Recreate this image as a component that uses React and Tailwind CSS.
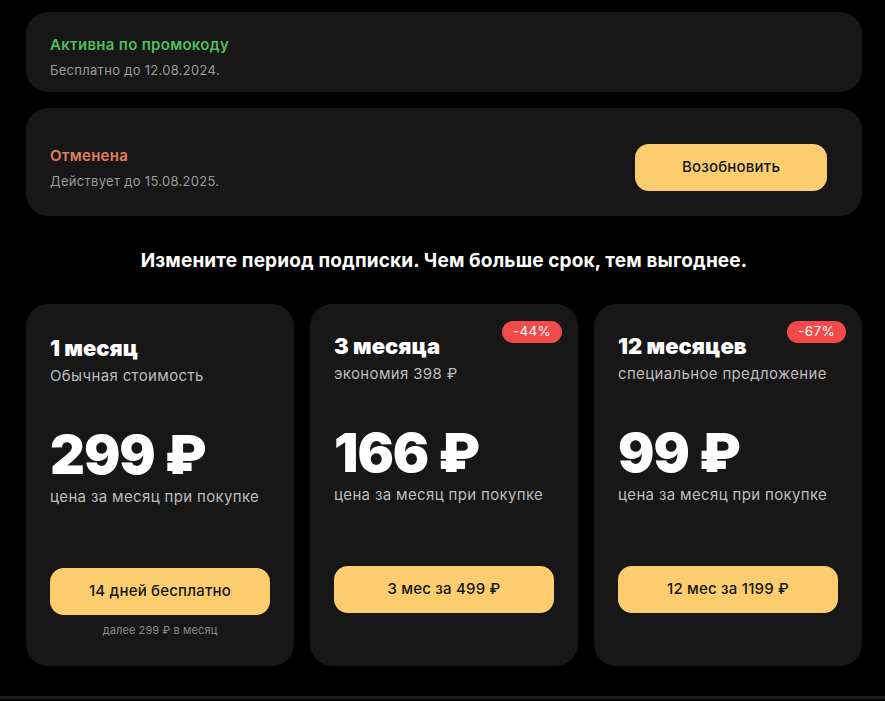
import React from "react";

const font = { fontFamily: "Inter, 'Noto Sans', sans-serif" };

function PriceCard({ title, subtitle, price, button, note, badge, shift }) {
  return (
    <div className={`relative h-[362px] w-[268px] rounded-[22px] bg-[#171717] px-6 ${shift ? "pt-[30px]" : "pt-[28px]"}`}>
      {badge && (
        <div className="absolute right-4 top-[17px] flex h-[22px] items-center rounded-full bg-[#f24a4a] px-[11px] text-[13.5px] leading-none tracking-[0.3px] text-white">
          {badge}
        </div>
      )}
      <div className="text-[22px] font-black leading-[28px] tracking-[0px] text-white">{title}</div>
      <div className="mt-[4px] text-[15px] leading-[20px] tracking-[0.35px] text-[#bdbdbd]">{subtitle}</div>
      <div className="mt-[39px] text-[54px] font-black leading-[60px] tracking-[-1px] text-white">{price}</div>
      <div className="mt-[2px] text-[15px] leading-[20px] tracking-[0.35px] text-[#bdbdbd]">{button.caption}</div>
      <button className="mt-[61px] flex h-[47px] w-[220px] items-center justify-center rounded-[14px] bg-[#fccd6e] text-[15px] font-medium tracking-[0.2px] text-[#161616]">
        {button.label}
      </button>
      {note && <div className="mt-[8px] text-center text-[11px] leading-[14px] tracking-[0.1px] text-[#8a8a8a]">{note}</div>}
    </div>
  );
}

export default function App() {
  return (
    <div className="min-h-[701px] w-full bg-black" style={font}>
      <div className="pl-[26px] pr-[23px] pt-[12px]">
        <div className="h-[80px] rounded-[22px] bg-[#171717] pl-6 pt-[23px]">
          <div className="text-[15px] font-semibold leading-[20px] tracking-[0.3px] text-[#4fbf56]">Активна по промокоду</div>
          <div className="mt-[6px] text-[13px] leading-[18px] tracking-[0.3px] text-[#9b9b9b]">Бесплатно до 12.08.2024.</div>
        </div>
        <div className="mt-4 flex h-[108px] items-start justify-between rounded-[22px] bg-[#171717] pl-6 pr-[35px] pt-[36px]">
          <div className="mt-[2px]">
            <div className="text-[15px] font-semibold leading-[20px] tracking-[0.3px] text-[#e27d5f]">Отменена</div>
            <div className="mt-[6px] text-[13px] leading-[18px] tracking-[0.3px] text-[#9b9b9b]">Действует до 15.08.2025.</div>
          </div>
          <button className="flex h-[47px] w-[192px] items-center justify-center rounded-[14px] bg-[#fccd6e] text-[15px] font-medium tracking-[0.2px] text-[#161616]">
            Возобновить
          </button>
        </div>
        <div className="mt-[33px] text-center text-[19px] font-bold leading-[24px] tracking-[0.15px] text-white">
          Измените период подписки. Чем больше срок, тем выгоднее.
        </div>
        <div className="mt-[31px] flex gap-4">
          <PriceCard
            shift
            title="1 месяц"
            subtitle="Обычная стоимость"
            price="299 ₽"
            button={{ caption: "цена за месяц при покупке", label: "14 дней бесплатно" }}
            note="далее 299 ₽ в месяц"
          />
          <PriceCard
            title="3 месяца"
            subtitle="экономия 398 ₽"
            price="166 ₽"
            badge="-44%"
            button={{ caption: "цена за месяц при покупке", label: "3 мес за 499 ₽" }}
          />
          <PriceCard
            title="12 месяцев"
            subtitle="специальное предложение"
            price="99 ₽"
            badge="-67%"
            button={{ caption: "цена за месяц при покупке", label: "12 мес за 1199 ₽" }}
          />
        </div>
      </div>
      <div className="mt-[30px] h-[3px] w-full bg-[#1e1e1e]" />
    </div>
  );
}
